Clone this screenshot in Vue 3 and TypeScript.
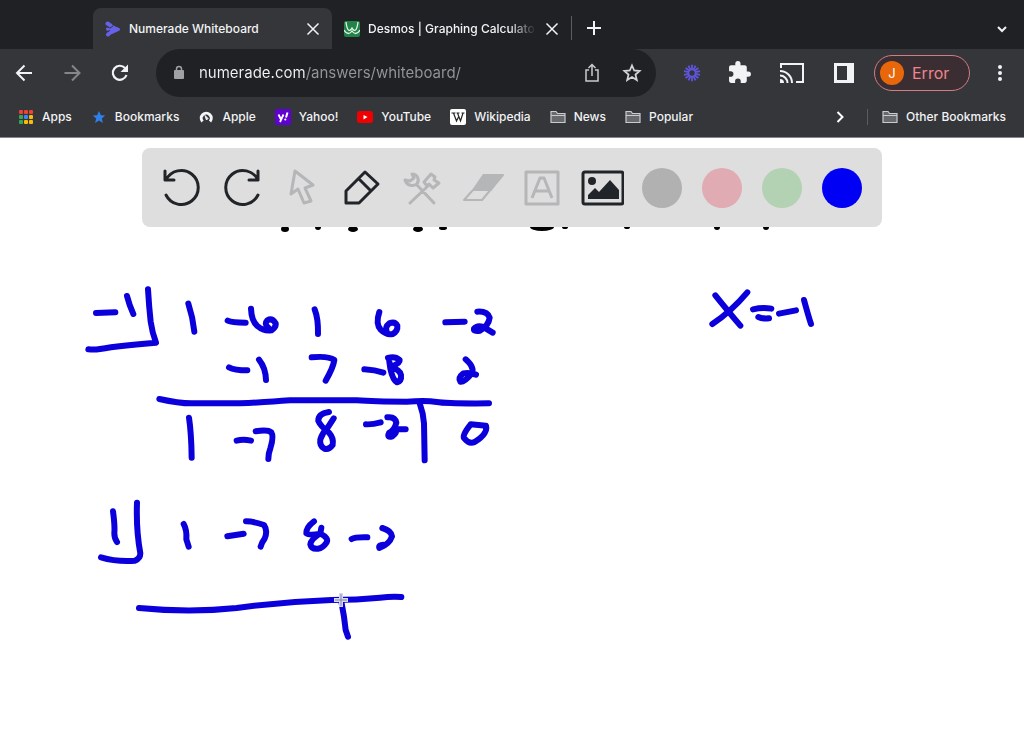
<script setup lang="ts">
import { ref } from 'vue'

interface Bookmark {
  label: string
  icon: 'apps' | 'star' | 'apple' | 'yahoo' | 'youtube' | 'wikipedia' | 'folder'
}

interface Panel {
  x: number
  y: number
  w: number
  h: number
  strokes: string[]
}

const bookmarks: Bookmark[] = [
  { label: 'Apps', icon: 'apps' },
  { label: 'Bookmarks', icon: 'star' },
  { label: 'Apple', icon: 'apple' },
  { label: 'Yahoo!', icon: 'yahoo' },
  { label: 'YouTube', icon: 'youtube' },
  { label: 'Wikipedia', icon: 'wikipedia' },
  { label: 'News', icon: 'folder' },
  { label: 'Popular', icon: 'folder' },
]

const appDots = ['#ea4335', '#ea4335', '#ea4335', '#34a853', '#4285f4', '#fbbc05', '#34a853', '#fbbc05', '#fbbc05']
const rays = Array.from({ length: 14 }, (_, i) => (i * 360) / 14)

const address = ref('numerade.com/answers/whiteboard/')
const pen = ref('blue')
const pens = ['gray', 'red', 'green', 'blue']

// Each panel is a patch of the board drawn at three units to the pixel.
const panels: Panel[] = [
  {
    x: 80, y: 142, w: 220, h: 190,
    strokes: [
      'M48 99L106 97',
      'M141 48Q148 76 160 102',
      'M204 28Q207 80 212 125Q217 160 228 188Q120 196 60 207Q42 210 25 208',
      'M325 71Q338 110 343 155',
      'M443 122Q455 128 497 128',
      'M513 86Q514 122 532 138Q553 155 574 151Q589 142 587 130Q576 113 562 121Q552 132 564 142',
      'M447 262Q464 271 502 271',
      'M537 239Q557 264 558 300',
      'M327 413Q334 460 335 533',
      'M470 482Q489 477 513 482',
      'M527 454Q563 448 574 457Q582 469 571 505Q565 520 565 537',
    ],
  },
  {
    x: 290, y: 142, w: 220, h: 190,
    strokes: [
      'M-392 357Q-330 371 -290 370L-150 370Q-60 366 0 361L200 361Q250 365 350 365Q410 361 440 366Q470 371 597 370',
      'M74 88Q85 116 84 162',
      'M268 96Q256 132 272 149Q289 166 308 162Q324 154 322 137Q315 123 298 130Q284 141 290 154',
      'M466 127L524 125',
      'M562 95Q592 93 599 113Q596 137 570 152Q550 155 552 146Q562 134 582 142L608 158',
      'M65 232Q115 227 133 240Q130 262 107 302',
      'M223 268Q255 270 280 278',
      'M294 234Q315 228 329 240Q331 250 302 260M297 238L301 266Q308 300 321 307Q335 303 333 285Q328 267 304 264',
      'M527 238Q555 263 545 280Q524 307 511 305Q503 293 520 280Q537 276 558 284',
      'M117 396Q84 401 85 423Q91 438 116 457Q132 475 128 495Q116 511 103 506Q88 498 91 478Q98 457 115 440L131 415',
      'M228 433Q247 434 272 427',
      'M292 412Q315 409 319 428Q314 450 297 459Q290 474 307 469Q321 459 319 448L347 448',
      'M389 370Q400 400 402 430L404 541',
      'M542 433Q516 465 522 474Q537 494 554 486Q594 461 588 437Q566 436 542 433',
    ],
  },
  {
    x: 90, y: 352, w: 320, h: 160,
    strokes: [
      'M69 64Q75 107 73 130Q73 145 81 156',
      'M141 38Q138 120 151 190Q151 206 135 212Q80 216 33 202',
      'M281 102Q291 120 289 148L296 170',
      'M412 139L461 131',
      'M468 94Q490 94 522 105Q534 122 524 146Q516 156 512 170',
      'M672 94Q648 112 649 130Q657 137 691 131Q717 144 710 157Q699 174 684 176Q664 178 661 163Q663 148 691 130L694 113',
      'M785 147Q795 141 832 142',
      'M877 114Q904 122 906 139Q898 163 868 174Q865 164 880 164',
      'M147 354Q300 369 440 354Q580 335 725 330Q800 330 870 323Q905 319 934 321',
      'M754 335Q763 380 767 420L774 440',
    ],
  },
  {
    x: 700, y: 142, w: 130, h: 60,
    strokes: [
      'M46 46Q88 98 121 137',
      'M142 37Q94 94 37 132',
      'M159 88Q188 81 214 86',
      'M175 111Q188 117 207 115',
      'M237 101L288 91',
      'M312 60Q325 108 333 132',
    ],
  },
]
</script>

<template>
  <div class="browser">
    <header class="chrome">
      <nav class="tabs" aria-label="Open tabs">
        <div class="tab active">
          <svg class="i16" viewBox="0 0 16 16" aria-hidden="true">
            <path d="M2.500 2.500L5.500 4.500M3 13.500L5.500 11.500M3 8H6" stroke="#6561e8" stroke-width="4" stroke-linecap="round" />
            <path d="M6.500 5.500L13.500 8.500L7 11.500Z" fill="#6561e8" stroke="#6561e8" stroke-width="3" stroke-linejoin="round" />
            <path d="M1 5.500L5 7L8 5M1 11L5 9.500" fill="none" stroke="#35363a" stroke-width="1" />
          </svg>
          <a class="tab-title" href="#whiteboard">Numerade Whiteboard</a>
          <button class="close" aria-label="Close Numerade Whiteboard">
            <svg class="i16" viewBox="0 0 16 16"><path d="M2.500 2.500L13.500 13.500M13.500 2.500L2.500 13.500" /></svg>
          </button>
        </div>
        <div class="tab">
          <svg class="i16" viewBox="0 0 16 16" aria-hidden="true">
            <rect width="16" height="16" rx="2" fill="#218347" />
            <path d="M2 1C3 9 5 12 8 7C11 12 13 9 14 1M0 9C3 14 6 13 8 10C10 13 13 14 16 9" fill="none" stroke="#e6f4ea" stroke-width="1.300" />
          </svg>
          <a class="tab-title fade" href="#desmos">Desmos | Graphing Calculato</a>
          <button class="close" aria-label="Close Desmos">
            <svg class="i16" viewBox="0 0 16 16"><path d="M2.500 2.500L13.500 13.500M13.500 2.500L2.500 13.500" /></svg>
          </button>
        </div>
        <button class="new-tab" aria-label="New tab">
          <svg class="i16" viewBox="0 0 16 16"><path d="M8 1V15M1 8H15" /></svg>
        </button>
        <button class="tab-search" aria-label="Search tabs">
          <svg class="i16" viewBox="0 0 16 16"><path d="M4 6L8 10L12 6" /></svg>
        </button>
      </nav>

      <div class="toolbar">
        <button class="nav" aria-label="Back">
          <svg class="i20" viewBox="0 0 20 20"><path d="M18 10H3.500M10.500 2.500L3 10L10.500 17.500" fill="none" stroke="#f1f3f4" stroke-width="2" /></svg>
        </button>
        <button class="nav" aria-label="Forward">
          <svg class="i20" viewBox="0 0 20 20"><path d="M2.500 10H17M10 2.500L17.500 10L10 17.500" fill="none" stroke="#85868a" stroke-width="2" /></svg>
        </button>
        <button class="nav" aria-label="Reload">
          <svg class="i20" viewBox="0 0 20 20">
            <path d="M16.500 12A7 7 0 1 1 15 5" fill="none" stroke="#f1f3f4" stroke-width="2.200" />
            <path d="M18 1.500V9H10.500Z" fill="#f1f3f4" />
          </svg>
        </button>
        <div class="omnibox">
          <svg class="lock" viewBox="0 0 12 16" aria-hidden="true">
            <rect x="1" y="5" width="10" height="9" rx="1" fill="#a0a1a4" />
            <path d="M3.500 6V4a2.500 2.500 0 0 1 5 0V6" fill="none" stroke="#a0a1a4" stroke-width="1.500" />
          </svg>
          <input v-model="address" class="address" type="text" aria-label="Address" spellcheck="false" />
          <button class="omni-action" aria-label="Share">
            <svg class="i20" viewBox="0 0 20 20"><path d="M7 7H4V18H16V7H13M10 13V2M6.500 5L10 1.500L13.500 5" fill="none" stroke="#c8cacd" stroke-width="1.500" /></svg>
          </button>
          <button class="omni-action" aria-label="Bookmark this page">
            <svg class="i20" viewBox="0 0 20 20"><path d="M10 2.500L12.200 7.500L17.600 8L13.500 11.600L14.800 17L10 14.100L5.200 17L6.500 11.600L2.400 8L7.800 7.500Z" fill="none" stroke="#d2d4d7" stroke-width="1.800" /></svg>
          </button>
        </div>
        <button class="nav" aria-label="Extension">
          <svg class="i20" viewBox="0 0 20 20">
            <g stroke="#5f55df" stroke-width="1.800">
              <path v-for="r in rays" :key="r" d="M10 6.500V1.800" :transform="`rotate(${r} 10 10)`" />
            </g>
            <circle cx="10" cy="10" r="3.500" fill="none" stroke="#5f55df" stroke-width="1.600" />
          </svg>
        </button>
        <button class="nav" aria-label="Extensions">
          <svg class="i24" viewBox="1 1 23 23"><path fill="#f1f3f4" d="M20.500 11H19V7c0-1.100-.9-2-2-2h-4V3.500a2.500 2.500 0 0 0-5 0V5H4c-1.100 0-2 .9-2 2v3.800h1.500a2.700 2.700 0 0 1 0 5.400H2V20c0 1.100.9 2 2 2h3.800v-1.500a2.700 2.700 0 0 1 5.400 0V22H17c1.100 0 2-.9 2-2v-4h1.500a2.500 2.500 0 0 0 0-5z" /></svg>
        </button>
        <button class="nav wide" aria-label="Cast">
          <svg class="i26" viewBox="0 0 26 26">
            <path d="M2 8V4H24V22H17" fill="none" stroke="#f1f3f4" stroke-width="2" />
            <path d="M1 11A12 12 0 0 1 13 23M1 15.500A7.500 7.500 0 0 1 8.500 23" fill="none" stroke="#f1f3f4" stroke-width="2" />
            <path d="M1 19A4 4 0 0 1 5 23H1Z" fill="#f1f3f4" />
          </svg>
        </button>
        <button class="nav" aria-label="Side panel">
          <svg class="i20" viewBox="0 0 20 20"><path d="M0 0H20V20H0ZM3 3V17H13V3Z" fill="#f1f3f4" fill-rule="evenodd" /></svg>
        </button>
        <button class="profile"><span class="avatar">J</span>Error</button>
        <button class="nav menu" aria-label="Menu">
          <svg class="i20" viewBox="0 0 20 20"><g fill="#f1f3f4"><circle cx="10" cy="4" r="2" /><circle cx="10" cy="10" r="2" /><circle cx="10" cy="16" r="2" /></g></svg>
        </button>
      </div>

      <nav class="bookmarks" aria-label="Bookmarks">
        <a v-for="b in bookmarks" :key="b.label" class="bookmark" href="#bookmark">
          <svg class="i16" viewBox="0 0 16 16" aria-hidden="true">
            <template v-if="b.icon === 'apps'">
              <rect v-for="(c, i) in appDots" :key="i" :x="1 + (i % 3) * 5" :y="1 + Math.floor(i / 3) * 5" width="4" height="4" rx="1" :fill="c" />
            </template>
            <path v-else-if="b.icon === 'star'" fill="#2f80ed" d="M8 2L9.800 6.300L14.200 6.600L10.800 9.500L11.900 14L8 11.600L4.100 14L5.200 9.500L1.800 6.600L6.200 6.300Z" />
            <template v-else-if="b.icon === 'apple'">
              <path d="M4.500 12.500A5 5 0 1 1 12 12.500" fill="none" stroke="#f4f5f6" stroke-width="3" />
              <path d="M7 6.500L10 9.500L8.500 11Z" fill="#f4f5f6" stroke="#f4f5f6" />
            </template>
            <template v-else-if="b.icon === 'yahoo'">
              <rect width="16" height="16" rx="1" fill="#5f01d1" />
              <path d="M3.500 5.500L6 10.500M8.500 5.500L5 13" fill="none" stroke="#fff" stroke-width="1.800" />
              <path d="M12.500 3.500L11 8.500" stroke="#fff" stroke-width="2" />
              <circle cx="10.300" cy="10.500" r="1.100" fill="#fff" />
            </template>
            <template v-else-if="b.icon === 'youtube'">
              <rect y="2" width="16" height="12" rx="3" fill="#f00000" />
              <path d="M6.500 6V10.500L10.500 8Z" fill="#fff" />
            </template>
            <template v-else-if="b.icon === 'wikipedia'">
              <rect width="16" height="16" rx="2" fill="#fff" />
              <path d="M1.500 4H5.500M6.500 4H9.500M11.500 4H14.500M3.500 4L6.500 12L8.500 8M7.500 4L10.500 12L13 4" fill="none" stroke="#222" stroke-width="1.200" />
            </template>
            <template v-else>
              <path d="M1 2.500H6L7.500 4.500H15V13.500H1Z" fill="#68696c" stroke="#c9cbce" stroke-width="1.200" />
              <path d="M1 6.500H15" stroke="#c9cbce" />
            </template>
          </svg>
          {{ b.label }}
        </a>
        <button class="more" aria-label="More bookmarks">
          <svg class="i16" viewBox="0 0 16 16"><path d="M5.500 3L10.500 8L5.500 13" fill="none" stroke="#fff" stroke-width="2" /></svg>
        </button>
        <a class="bookmark other" href="#other">
          <svg class="i16" viewBox="0 0 16 16" aria-hidden="true">
            <path d="M1 2.500H6L7.500 4.500H15V13.500H1Z" fill="#68696c" stroke="#c9cbce" stroke-width="1.200" />
            <path d="M1 6.500H15" stroke="#c9cbce" />
          </svg>
          Other Bookmarks
        </a>
      </nav>
    </header>

    <main class="board">
      <svg class="ink" role="img" aria-label="Handwritten synthetic division">
        <g fill="#000">
          <ellipse cx="285" cy="91" rx="4" ry="3" />
          <ellipse cx="318" cy="89" rx="3" ry="3" />
          <ellipse cx="353" cy="91" rx="5" ry="3" />
          <ellipse cx="418" cy="91" rx="5" ry="3" />
          <ellipse cx="443" cy="90" rx="4" ry="2" />
          <ellipse cx="542" cy="89" rx="12" ry="4" />
          <ellipse cx="565" cy="89" rx="3" ry="2" />
          <ellipse cx="627" cy="89" rx="3" ry="2" />
          <ellipse cx="717" cy="89" rx="3" ry="3" />
          <ellipse cx="766" cy="89" rx="3" ry="3" />
        </g>
        <svg v-for="(p, i) in panels" :key="i" :x="p.x" :y="p.y" :width="p.w" :height="p.h" :viewBox="`0 0 ${p.w * 3} ${p.h * 3}`" overflow="visible">
          <path v-for="(d, n) in p.strokes" :key="n" :d="d" fill="none" stroke="#0b00dc" stroke-width="18" stroke-linecap="round" stroke-linejoin="round" />
        </svg>
        <svg x="333" y="454" width="16" height="16" viewBox="0 0 16 16">
          <path d="M1 8H15M8 1V15" stroke="#d8d8ee" stroke-width="4" />
          <path d="M2 8H14M8 2V14" stroke="#8585ac" stroke-width="1" />
        </svg>
      </svg>

      <div class="tools" role="toolbar" aria-label="Drawing tools">
        <button class="tool" aria-label="Undo">
          <svg viewBox="0 0 44 44"><path d="M6 14A17 17 0 1 1 6 29M5 5V14H14" /></svg>
        </button>
        <button class="tool" aria-label="Redo">
          <svg viewBox="0 0 44 44"><path d="M38 14A17 17 0 1 0 38 29M38 5V14H29" /></svg>
        </button>
        <button class="tool muted" aria-label="Select">
          <svg viewBox="0 0 44 44"><path d="M15 5L11 28L18 23L24 37L31 35L25 22L33 19Z" /></svg>
        </button>
        <button class="tool" aria-label="Pen">
          <svg viewBox="0 0 44 44"><path d="M6 25L25 6L38 18L19 37H6ZM19 13L31 25" /></svg>
        </button>
        <button class="tool muted" aria-label="Tools">
          <svg viewBox="0 0 44 44"><path d="M10 37L29 19M34 37L17 19M12 8C17 8 20 13 17 18C12 21 6 19 5 14L10 15L14 12ZM24 16L31 8L35 11L34 14L39 17L33 22L29 18L27 20Z" /></svg>
        </button>
        <button class="tool muted" aria-label="Eraser">
          <svg viewBox="0 0 44 44"><path d="M23 8H43L32 24H12Z" fill="#b5b6b8" stroke="none" /><path d="M24 9H43L22 34H4L13 24H31" stroke-width="2" /></svg>
        </button>
        <button class="tool muted" aria-label="Text">
          <svg viewBox="0 0 44 44"><path d="M6 6H38V38H6ZM12 32L20 12H24L32 32M15 25H29" stroke-linecap="butt" /></svg>
        </button>
        <button class="tool" aria-label="Image">
          <svg viewBox="0 0 44 44"><rect x="3" y="6" width="40" height="32" rx="2" /><circle cx="12" cy="15" r="4" fill="#212529" stroke="none" /><path d="M8 33V29L15 22L19 26L30 14L39 24V33Z" fill="#212529" stroke="none" /></svg>
        </button>
        <label v-for="c in pens" :key="c" class="tool">
          <input v-model="pen" class="pen" :class="c" type="radio" name="pen" :value="c" :aria-label="c + ' pen'" />
        </label>
      </div>
    </main>
  </div>
</template>

<style>
html,
body,
#app {
  height: 100%;
}
body {
  margin: 0;
  background: #fff;
}
</style>

<style scoped>
.browser {
  display: flex;
  flex-direction: column;
  min-height: 100%;
  overflow: hidden;
  font-family: Inter, Roboto, sans-serif;
  font-size: 12px;
  font-weight: 500;
  color: #f1f3f4;
}
button {
  display: flex;
  align-items: center;
  justify-content: center;
  padding: 0;
  border: 0;
  background: none;
  color: inherit;
  font: inherit;
}
a {
  color: inherit;
  text-decoration: none;
}
svg {
  display: block;
  flex: none;
}
.i16 {
  width: 16px;
  height: 16px;
}
.i20 {
  width: 20px;
  height: 20px;
}
.i24 {
  width: 24px;
  height: 24px;
}
.i26 {
  width: 26px;
  height: 26px;
}
.chrome {
  background: #35363a;
  border-bottom: 1px solid #85868a;
}
.tabs {
  display: flex;
  align-items: flex-end;
  height: 49px;
  padding-left: 93px;
  background: #202124;
}
.tab {
  display: flex;
  align-items: center;
  gap: 8px;
  box-sizing: border-box;
  width: 239px;
  height: 41px;
  padding: 0 11px 0 12px;
  border-radius: 8px 8px 0 0;
}
.tab.active {
  background: #35363a;
}
.tab-title {
  flex: 1;
  white-space: nowrap;
}
.fade {
  mask-image: linear-gradient(to right, #000 84%, transparent);
}
.tabs button path {
  fill: none;
  stroke: #f1f3f4;
  stroke-width: 2;
}
.tabs .close path {
  stroke-width: 1.5;
}
.new-tab {
  width: 44px;
  height: 24px;
  margin-bottom: 9px;
  border-left: 1px solid #5b5c60;
}
.tab-search {
  width: 44px;
  height: 41px;
  margin-left: auto;
}
.toolbar {
  display: flex;
  align-items: center;
  height: 48px;
}
.nav {
  flex: none;
  width: 48px;
  height: 48px;
}
.nav.wide {
  width: 56px;
}
.nav.menu {
  margin-left: 6px;
}
.omnibox {
  display: flex;
  align-items: center;
  flex: 1;
  box-sizing: border-box;
  height: 48px;
  min-width: 0;
  margin: 0 12px;
  padding: 0 4px 0 17px;
  border-radius: 24px;
  background: #202124;
}
.lock {
  width: 12px;
  height: 16px;
  margin-right: 14px;
}
.address {
  flex: 1;
  min-width: 0;
  padding: 0;
  border: 0;
  outline: 0;
  background: linear-gradient(to right, #f1f3f4 107px, #94969a 107px);
  background-clip: text;
  color: transparent;
  font: inherit;
  font-size: 15px;
  font-weight: 400;
  line-height: 24px;
}
.omni-action {
  width: 40px;
  height: 40px;
}
.profile {
  justify-content: flex-start;
  gap: 8px;
  box-sizing: border-box;
  width: 96px;
  height: 36px;
  margin-left: 6px;
  padding-left: 5px;
  border: 1px solid #d07d85;
  border-radius: 18px;
  background: #3b2e33;
  color: #ef858e;
  font-size: 16px;
  font-weight: 400;
}
.avatar {
  width: 24px;
  border-radius: 12px;
  background: #e8670a;
  color: #fff;
  font-size: 13px;
  line-height: 24px;
  text-align: center;
}
.bookmarks {
  display: flex;
  align-items: center;
  gap: 19px;
  height: 39px;
  padding: 0 18px;
  margin-bottom: 1px;
}
.bookmark {
  display: flex;
  align-items: center;
  gap: 8px;
  white-space: nowrap;
}
.more {
  width: 16px;
  height: 24px;
  margin-left: auto;
}
.other {
  height: 16px;
  padding-left: 14px;
  border-left: 1px solid #5b5c60;
}
.board {
  display: flex;
  flex: 1;
  flex-direction: column;
  align-items: center;
  position: relative;
  padding-top: 10px;
  background: #fff;
}
.ink {
  position: absolute;
  inset: 0;
  width: 100%;
  height: 100%;
}
.tools {
  display: flex;
  position: relative;
  padding: 10px 10px 9px;
  border-radius: 8px;
  background: #dedede;
}
.tool {
  display: flex;
  align-items: center;
  justify-content: center;
  width: 60px;
  height: 60px;
}
.tool svg {
  width: 44px;
  height: 44px;
  fill: none;
  stroke: #212529;
  stroke-width: 3;
  stroke-linecap: round;
  stroke-linejoin: round;
}
.tool.muted svg {
  stroke: #b5b6b8;
}
.pen {
  width: 40px;
  height: 40px;
  margin: 0;
  border-radius: 50%;
  appearance: none;
}
.gray {
  background: #b1b1b1;
}
.red {
  background: #e0abb2;
}
.green {
  background: #b3d1b3;
}
.blue {
  background: #0000f5;
}
</style>
